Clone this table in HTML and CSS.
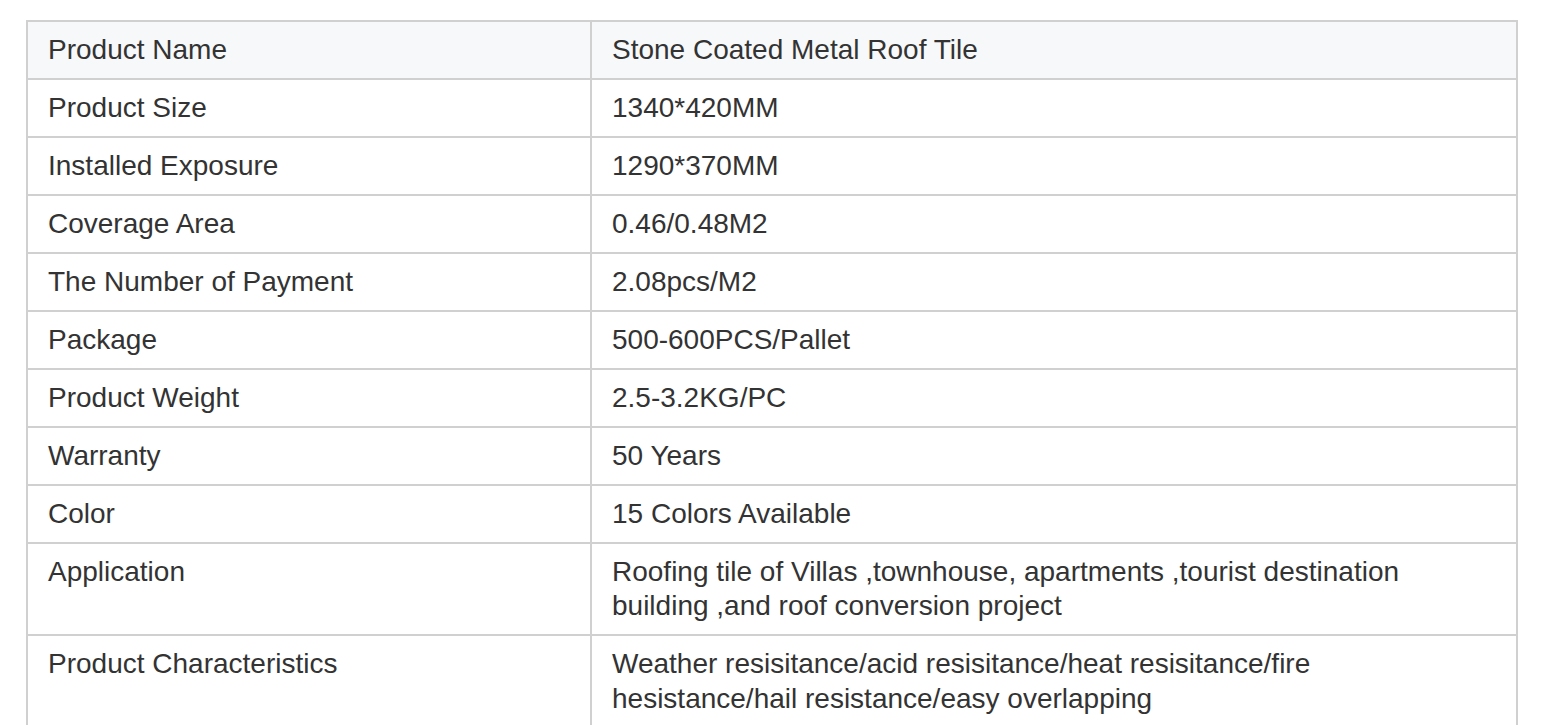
FILE: index.html
```html
<!DOCTYPE html>
<html lang="en">
<head>
<meta charset="utf-8">
<title>Product Specifications</title>
<link rel="stylesheet" href="styles.css">
</head>
<body>
<div class="wrap">
<table class="spec">
  <colgroup>
    <col class="col-name">
    <col class="col-value">
  </colgroup>
  <tbody>
    <tr class="head"><td>Product Name</td><td>Stone Coated Metal Roof Tile</td></tr>
    <tr><td>Product Size</td><td>1340*420MM</td></tr>
    <tr><td>Installed Exposure</td><td>1290*370MM</td></tr>
    <tr><td>Coverage Area</td><td>0.46/0.48M2</td></tr>
    <tr><td>The Number of Payment</td><td>2.08pcs/M2</td></tr>
    <tr><td>Package</td><td>500-600PCS/Pallet</td></tr>
    <tr><td>Product Weight</td><td>2.5-3.2KG/PC</td></tr>
    <tr><td>Warranty</td><td>50 Years</td></tr>
    <tr><td>Color</td><td>15 Colors Available</td></tr>
    <tr><td>Application</td><td>Roofing tile of Villas ,townhouse, apartments ,tourist destination building ,and roof conversion project</td></tr>
    <tr><td>Product Characteristics</td><td>Weather resisitance/acid resisitance/heat resisitance/fire hesistance/hail resistance/easy overlapping</td></tr>
  </tbody>
</table>
</div>
</body>
</html>
```
FILE: styles.css
```css
html, body {
  margin: 0;
  padding: 0;
  background: #ffffff;
}
.wrap {
  padding: 20px 0 0 26px;
}
.spec {
  border-collapse: collapse;
  table-layout: fixed;
  width: 1492px;
  font-family: "Liberation Sans", Arial, sans-serif;
  font-size: 28px;
  line-height: 34.6px;
  color: #333333;
}
.col-name {
  width: 564px;
}
.spec td {
  border: 2px solid #d0d0d0;
  padding: 11px 19px 10.4px 20px;
  vertical-align: top;
  text-align: left;
}
.spec tr.head td {
  background: #f7f8fa;
}
.spec td:last-child {
  padding-right: 100px;
}
```
